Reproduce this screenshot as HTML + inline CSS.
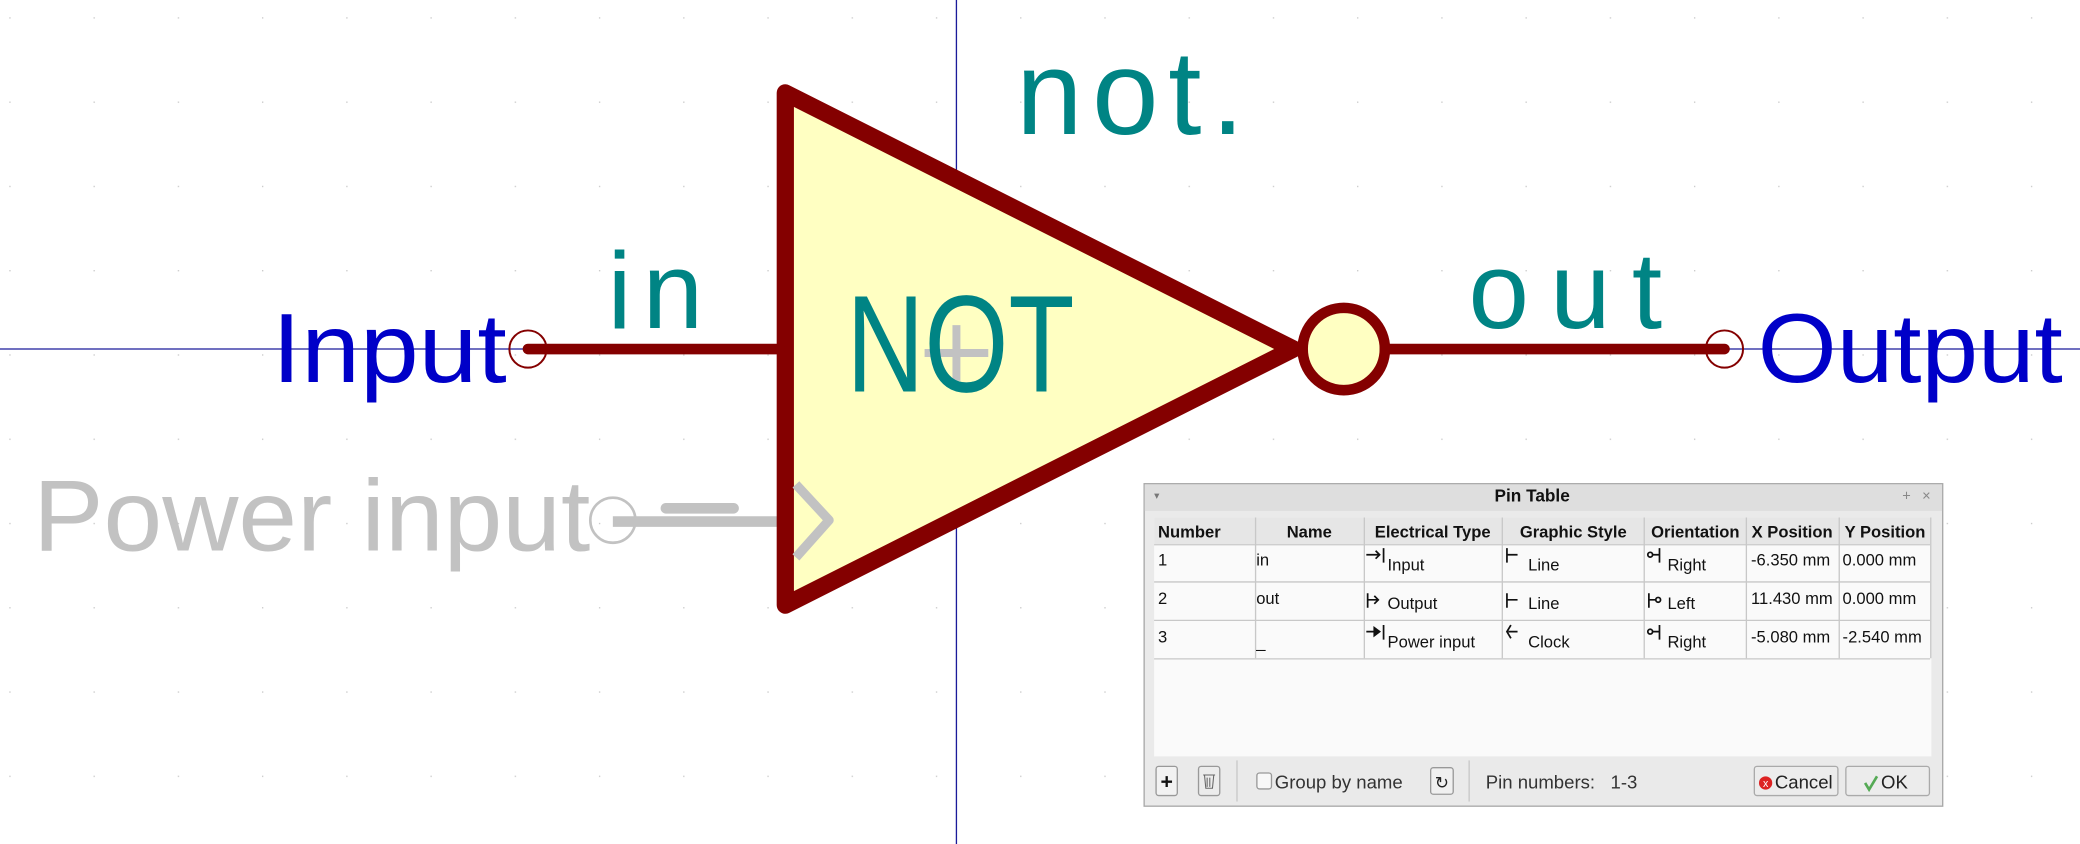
<!DOCTYPE html>
<html><head><meta charset="utf-8"><style>
html,body{margin:0;padding:0;background:#fff;width:2080px;height:844px;overflow:hidden}
svg{display:block}
.t{font-family:"Liberation Sans",sans-serif}
</style></head><body>
<svg width="2080" height="844" viewBox="0 0 1568 636" preserveAspectRatio="none" xmlns="http://www.w3.org/2000/svg">
<defs>
<pattern id="g" x="7" y="13" width="63.5" height="63.5" patternUnits="userSpaceOnUse"><rect width="1" height="1" fill="#c8c8c8"/></pattern>
</defs>
<rect width="1568" height="636" fill="#fff"/>
<rect width="1568" height="636" fill="url(#g)"/>
<line x1="0" y1="263" x2="1568" y2="263" stroke="#1a1a9a" stroke-width="1"/>
<line x1="721" y1="0" x2="721" y2="636" stroke="#1a1a9a" stroke-width="1"/>
<!-- power pin (gray) -->
<line x1="462" y1="393" x2="590" y2="393" stroke="#c2c2c2" stroke-width="8"/>
<line x1="502" y1="383" x2="553" y2="383" stroke="#c2c2c2" stroke-width="8" stroke-linecap="round"/>
<circle cx="462" cy="392" r="17" fill="none" stroke="#c2c2c2" stroke-width="2"/>
<text class="t" x="25" y="415" font-size="76" fill="#c2c2c2" textLength="420" lengthAdjust="spacingAndGlyphs">Power input</text>
<!-- triangle -->
<polygon points="592,70 975,263 592,456" fill="#ffffc2" stroke="#840000" stroke-width="13" stroke-linejoin="round"/>
<polyline points="600,365 625,392 600,420" fill="none" stroke="#c2c2c2" stroke-width="7" stroke-linejoin="round"/>
<!-- input pin -->
<line x1="398" y1="263" x2="588" y2="263" stroke="#840000" stroke-width="8" stroke-linecap="round"/>
<circle cx="398" cy="263" r="14" fill="none" stroke="#840000" stroke-width="1.5"/>
<!-- output pin -->
<circle cx="1013" cy="263" r="31" fill="#ffffc2" stroke="#840000" stroke-width="8"/>
<line x1="1044" y1="263" x2="1300" y2="263" stroke="#840000" stroke-width="8" stroke-linecap="round"/>
<circle cx="1300" cy="263" r="14" fill="none" stroke="#840000" stroke-width="1.5"/>
<!-- anchor cross -->
<line x1="697" y1="266" x2="745" y2="266" stroke="#c2c2c2" stroke-width="6"/>
<line x1="721" y1="245" x2="721" y2="287" stroke="#c2c2c2" stroke-width="6"/>
<!-- texts -->
<text class="t" x="205" y="288" font-size="74" fill="#0000c8" textLength="177" lengthAdjust="spacingAndGlyphs">Input</text>
<text class="t" x="1325" y="288" font-size="74" fill="#0000c8" textLength="230" lengthAdjust="spacingAndGlyphs">Output</text>
<text class="t" x="458" y="247" font-size="82" fill="#008484" textLength="72" lengthAdjust="spacing">in</text>
<text class="t" x="1107" y="247" font-size="82" fill="#008484" textLength="146" lengthAdjust="spacing">out</text>
<text class="t" x="638" y="295" font-size="104" fill="#008484" textLength="172" lengthAdjust="spacingAndGlyphs">NOT</text>
<text class="t" x="766" y="101" font-size="90" fill="#008484" textLength="172" lengthAdjust="spacing">not.</text>
<!-- dialog -->
<g class="t">
<rect x="862.5" y="364.5" width="602" height="243" fill="#eaeaea" stroke="#a8a8a8"/>
<rect x="863" y="365" width="601" height="20" fill="#dedede"/>
<text x="1155" y="378" font-size="13" font-weight="bold" text-anchor="middle" fill="#111">Pin Table</text>
<text x="870" y="376" font-size="8" fill="#777">▾</text>
<text x="1434" y="377" font-size="11" fill="#888">+</text>
<text x="1449" y="377" font-size="11" fill="#888">×</text>
<rect x="870" y="390" width="586" height="180" fill="#fafafa"/>
<rect x="870" y="390" width="585" height="20" fill="#e6e6e6"/>
<g stroke="#c8c8c8" stroke-width="1">
<line x1="870" y1="410.5" x2="1455" y2="410.5"/><line x1="870" y1="438.5" x2="1455" y2="438.5"/>
<line x1="870" y1="467.5" x2="1455" y2="467.5"/><line x1="870" y1="496.5" x2="1455" y2="496.5"/>
<line x1="946.5" y1="390" x2="946.5" y2="496"/><line x1="1028.5" y1="390" x2="1028.5" y2="496"/>
<line x1="1132.5" y1="390" x2="1132.5" y2="496"/><line x1="1239.5" y1="390" x2="1239.5" y2="496"/>
<line x1="1316.5" y1="390" x2="1316.5" y2="496"/><line x1="1386.5" y1="390" x2="1386.5" y2="496"/>
<line x1="1455.5" y1="390" x2="1455.5" y2="496"/>
</g>
<g font-size="12.5" font-weight="bold" fill="#111">
<text x="873" y="405">Number</text><text x="987" y="405" text-anchor="middle">Name</text>
<text x="1080" y="405" text-anchor="middle">Electrical Type</text><text x="1186" y="405" text-anchor="middle">Graphic Style</text>
<text x="1278" y="405" text-anchor="middle">Orientation</text><text x="1351" y="405" text-anchor="middle">X Position</text>
<text x="1421" y="405" text-anchor="middle">Y Position</text>
</g>
<g font-size="12.5" fill="#111">
<text x="873" y="426">1</text><text x="947" y="426">in</text>
<text x="1046" y="430">Input</text><text x="1152" y="430">Line</text><text x="1257" y="430">Right</text>
<text x="1320" y="426">-6.350 mm</text><text x="1389" y="426">0.000 mm</text>
<text x="873" y="455">2</text><text x="947" y="455">out</text>
<text x="1046" y="459">Output</text><text x="1152" y="459">Line</text><text x="1257" y="459">Left</text>
<text x="1320" y="455">11.430 mm</text><text x="1389" y="455">0.000 mm</text>
<text x="873" y="484">3</text><text x="947" y="488">_</text>
<text x="1046" y="488">Power input</text><text x="1152" y="488">Clock</text><text x="1257" y="488">Right</text>
<text x="1320" y="484">-5.080 mm</text><text x="1389" y="484">-2.540 mm</text>
</g>
<g stroke="#111" stroke-width="1.3" fill="none">
<path d="M1030 418h10M1037 415l3 3-3 3M1043 413v11"/>
<path d="M1031 447v11M1031 452h8M1036 449l3 3-3 3"/>
<path d="M1030 476h10M1043 471v11"/><path d="M1036 473l4 3-4 3z" fill="#111"/>
<path d="M1136 413v11M1136 418h8"/><path d="M1136 447v11M1136 452h8"/>
<path d="M1139 471l-3 5 3 5M1137 476h7"/>
<circle cx="1244" cy="418" r="1.8"/><path d="M1246 418h5M1251 413v11"/>
<path d="M1243 447v11M1243 452h5"/><circle cx="1250" cy="452" r="1.8"/>
<circle cx="1244" cy="476" r="1.8"/><path d="M1246 476h5M1251 471v11"/>
</g>
<!-- footer -->
<rect x="871.5" y="577.5" width="16" height="22" rx="2" fill="#f2f2f2" stroke="#999"/>
<text x="879.5" y="594" font-size="16" font-weight="bold" text-anchor="middle" fill="#111">+</text>
<rect x="903.5" y="577.5" width="16" height="22" rx="2" fill="#ececec" stroke="#999"/>
<path d="M907 584h9M908 584l1 10h5l1-10M910 586v7M912 586v7" stroke="#666" stroke-width="0.8" fill="none"/>
<line x1="932.5" y1="573" x2="932.5" y2="604" stroke="#c8c8c8"/>
<rect x="947.5" y="582.5" width="11" height="12" rx="2" fill="#f8f8f8" stroke="#999"/>
<text x="961" y="594" font-size="14" fill="#333">Group by name</text>
<rect x="1078.5" y="578.5" width="17" height="20" rx="2" fill="#f0f0f0" stroke="#999"/>
<text x="1087" y="594" font-size="13" text-anchor="middle" fill="#222">↻</text>
<line x1="1107.5" y1="573" x2="1107.5" y2="604" stroke="#c8c8c8"/>
<text x="1120" y="594" font-size="14" fill="#333" xml:space="preserve">Pin numbers:   1-3</text>
<rect x="1322.5" y="577.5" width="63" height="22" rx="2" fill="#ececec" stroke="#aaa"/>
<circle cx="1331" cy="590" r="5" fill="#d22"/>
<text x="1331" y="593" font-size="8" fill="#fff" text-anchor="middle">x</text>
<text x="1338" y="594" font-size="14" fill="#222">Cancel</text>
<rect x="1391.5" y="577.5" width="63" height="22" rx="2" fill="#ececec" stroke="#aaa"/>
<path d="M1406 590l3 5 6-10" stroke="#5a5" stroke-width="2" fill="none"/>
<text x="1418" y="594" font-size="14" fill="#222">OK</text>
</g>
</svg>
</body></html>
